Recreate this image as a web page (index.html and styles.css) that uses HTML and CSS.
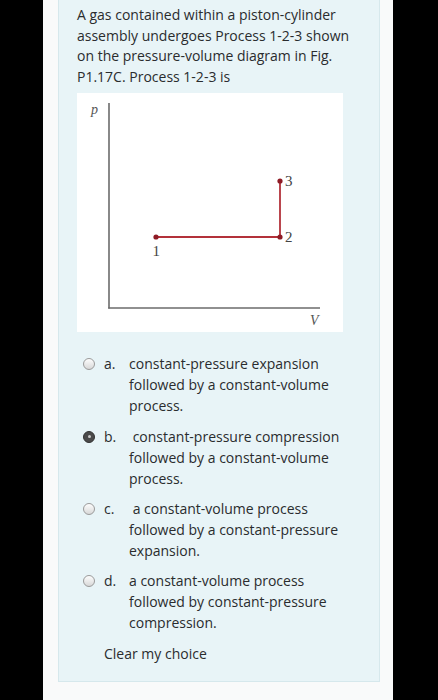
FILE: index.html
```html
<!DOCTYPE html>
<html lang="en">
<head>
<meta charset="utf-8">
<link rel="stylesheet" href="styles.css">
</head>
<body>
<div class="page">
  <div class="formulation">
    <p class="qtext">A gas contained within a piston-cylinder assembly undergoes Process 1-2-3 shown on the pressure-volume diagram in Fig. P1.17C. Process 1-2-3 is</p>
    <div class="figure">
      <svg width="266" height="239" viewBox="0 0 266 239" xmlns="http://www.w3.org/2000/svg">
        <line x1="32" y1="10" x2="32" y2="215.5" stroke="#6b6b6b" stroke-width="1.6"/>
        <line x1="31.2" y1="215" x2="243" y2="215" stroke="#6b6b6b" stroke-width="1.6"/>
        <text x="14" y="21" class="axis">p</text>
        <text x="233" y="232" class="axis">V</text>
        <line x1="79" y1="144" x2="203" y2="144" stroke="#b3313a" stroke-width="1.8"/>
        <line x1="203" y1="144" x2="203" y2="88" stroke="#b3313a" stroke-width="1.8"/>
        <circle cx="79" cy="144" r="2.6" fill="#8e1b25"/>
        <circle cx="203" cy="144" r="2.6" fill="#8e1b25"/>
        <circle cx="203" cy="88" r="2.6" fill="#8e1b25"/>
        <text x="75.5" y="163" class="num">1</text>
        <text x="208" y="149" class="num">2</text>
        <text x="208" y="93" class="num">3</text>
      </svg>
    </div>
    <div class="answers">
      <div class="option">
        <span class="radio"></span>
        <span class="letter">a.</span>
        <span class="text">constant-pressure expansion followed by a constant-volume process.</span>
      </div>
      <div class="option">
        <span class="radio checked"></span>
        <span class="letter">b.</span>
        <span class="text">&nbsp;constant-pressure compression followed by a constant-volume process.</span>
      </div>
      <div class="option">
        <span class="radio"></span>
        <span class="letter">c.</span>
        <span class="text">&nbsp;a constant-volume process followed by a constant-pressure expansion.</span>
      </div>
      <div class="option">
        <span class="radio"></span>
        <span class="letter">d.</span>
        <span class="text">a constant-volume process followed by constant-pressure compression.</span>
      </div>
    </div>
    <div class="clear">Clear my choice</div>
  </div>
</div>
</body>
</html>
```

FILE: styles.css
```css
html, body {
  margin: 0;
  padding: 0;
  background: #000;
  height: 700px;
  overflow: hidden;
}
.page {
  margin: 0 45px 0 43px;
  height: 700px;
  background: #f9fafa;
  padding: 0 13px 0 15px;
  box-sizing: border-box;
}
.formulation {
  background: #e8f4f7;
  border: 1px solid #d6e8ec;
  border-top: none;
  padding: 5px 14px 17px 18px;
  font-family: "Open Sans", "DejaVu Sans", sans-serif;
  font-size: 14px;
  color: #2a2c2e;
}
.qtext {
  margin: 0;
  line-height: 20.7px;
}
.figure {
  margin-top: 5px;
  width: 266px;
  height: 239px;
  background: #fff;
}
.figure svg {
  display: block;
}
.axis {
  font-family: "Liberation Serif", serif;
  font-style: italic;
  font-size: 14px;
  fill: #555;
}
.num {
  font-family: "Liberation Serif", serif;
  font-size: 15px;
  fill: #444;
}
.answers {
  margin-top: 21.5px;
  padding-left: 6px;
  padding-right: 14px;
}
.option {
  display: flex;
  align-items: flex-start;
  line-height: 21px;
  margin-bottom: 9.3px;
}
.radio {
  flex: none;
  width: 10px;
  height: 10px;
  border-radius: 50%;
  border: 1px solid #9a9a9a;
  background: linear-gradient(#fdfdfd, #d8d8d8);
  margin-top: 5px;
  margin-right: 9px;
  box-sizing: content-box;
}
.radio.checked {
  border-color: #333;
  background: #4a4a4a;
  position: relative;
}
.radio.checked::after {
  content: "";
  position: absolute;
  left: 3.5px;
  top: 3.5px;
  width: 3px;
  height: 3px;
  border-radius: 50%;
  background: #c8c8c8;
}
.letter {
  flex: none;
  width: 25px;
}
.text {
  flex: 1;
}
.clear {
  margin-top: 6.7px;
  line-height: 21px;
  padding-left: 27px;
}
```
